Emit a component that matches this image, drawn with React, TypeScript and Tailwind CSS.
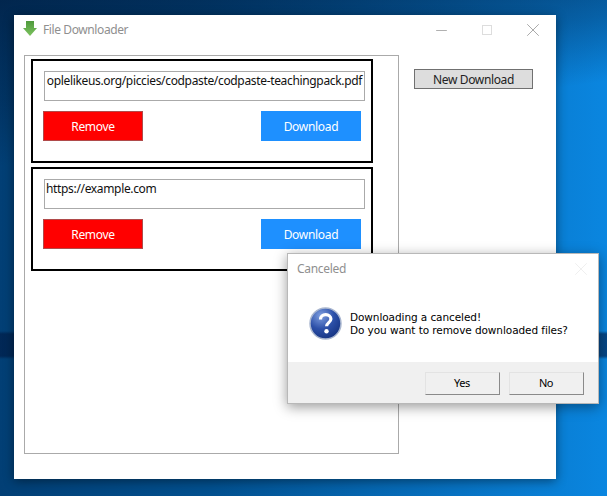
import React from 'react';
import { Minus, X } from 'lucide-react';

const DownloadItem = ({ url, scrolled, className }: { url: string; scrolled?: boolean; className?: string }) => (
    <div className={`w-[342px] h-[104px] border-2 border-black px-[10px] pt-[10px] ${className ?? ''}`}>
        <div className={`ml-[1px] w-[321px] h-[30px] border border-[#aaaaaa] overflow-hidden text-[12px] tracking-[-0.34px] leading-[18px] text-[#111] whitespace-nowrap ${scrolled ? 'flex justify-end pr-[2px]' : 'pl-[1px]'}`}>
            {url}
        </div>
        <div className="flex justify-between w-[318px] mt-[10px]">
            <button className="w-[100px] h-[30px] pt-[2px] bg-[#ff0000] border border-[#b04a4a] text-white text-[12px] tracking-[-0.3px]">Remove</button>
            <button className="w-[100px] h-[30px] pt-[2px] bg-[#1e90ff] text-white text-[12px] tracking-[-0.3px]">Download</button>
        </div>
    </div>
);

const QuestionIcon = () => (
    <svg width="33" height="33" viewBox="0 0 33 33">
        <defs>
            <radialGradient id="q" cx="35%" cy="25%" r="85%">
                <stop offset="0%" stopColor="#7f9fe0" />
                <stop offset="50%" stopColor="#2c50a8" />
                <stop offset="100%" stopColor="#122f7c" />
            </radialGradient>
        </defs>
        <circle cx="16.5" cy="16.5" r="15.5" fill="url(#q)" stroke="#a9b6cf" strokeWidth="1.5" />
        <path d="M11.5 12.5c0-3 2.2-4.8 5.2-4.8s5.2 1.7 5.2 4.3c0 3.6-4.3 3.7-4.3 7.3" fill="none" stroke="#fff" strokeWidth="3.2" />
        <circle cx="17.5" cy="24.2" r="2.2" fill="#fff" />
    </svg>
);

const DialogButton = ({ label }: { label: string }) => (
    <button className="w-[75px] h-[23px] pr-[1px] bg-[#f0f0f0] border border-t-[#e3e3e3] border-l-[#e3e3e3] border-r-[#8a8a8a] border-b-[#8a8a8a] text-black text-[11px] tracking-[-0.4px]">
        {label}
    </button>
);

export default function App() {
    return (
        <div className="relative w-[607px] h-[496px] overflow-hidden bg-[linear-gradient(180deg,transparent_331px,rgba(0,20,60,0.55)_334px,rgba(0,20,60,0.55)_356px,transparent_359px),linear-gradient(172deg,rgba(1,30,65,0.75)_0,rgba(1,30,65,0.35)_100px,transparent_165px),linear-gradient(90deg,#023f75_0,#02508f_35%,#0a86e0_100%)] font-['Noto_Sans','Open_Sans',sans-serif]">
            <div className="absolute left-[14px] top-[15px] w-[542px] h-[464px] bg-white shadow-[0_2px_10px_rgba(0,0,0,0.45)]">
                <div className="flex items-center h-[30px] pl-[9px]">
                    <svg width="14" height="15" viewBox="0 0 14 15" className="mb-[3px]">
                        <defs>
                            <linearGradient id="g" x1="0" y1="0" x2="0" y2="1">
                                <stop offset="0%" stopColor="#4f9a3c" />
                                <stop offset="100%" stopColor="#7cc25f" />
                            </linearGradient>
                        </defs>
                        <path d="M3 0h8v7h3L7 15 0 7h3z" fill="url(#g)" />
                    </svg>
                    <span className="ml-[6px] text-[12px] tracking-[-0.4px] text-[#8f8f8f]">File Downloader</span>
                    <div className="ml-auto flex items-center">
                        <Minus size={17} strokeWidth={1} className="mr-[32px] text-[#8f8f8f]" />
                        <div className="w-[10px] h-[10px] border border-[#dddddd] mr-[30px]" />
                        <X size={22} strokeWidth={0.8} className="mr-[12px] text-[#8a8a8a]" />
                    </div>
                </div>
                <div className="flex items-start pl-[10px] pt-[10px]">
                    <div className="w-[375px] h-[399px] border border-[#aaaaaa] pl-[6px] pt-[3px]">
                        <DownloadItem url="oplelikeus.org/piccies/codpaste/codpaste-teachingpack.pdf" scrolled />
                        <DownloadItem url="https://example.com" className="mt-[4px]" />
                    </div>
                    <button className="ml-[15px] mt-[14px] w-[119px] h-[20px] pt-[2px] bg-[#dddddd] border border-[#707070] text-[12px] tracking-[-0.35px] leading-none text-[#222]">
                        New Download
                    </button>
                </div>
            </div>
            <div className="absolute left-[287px] top-[253px] w-[312px] h-[151px] bg-white border border-[#b8b8b8] shadow-[0_3px_12px_rgba(0,0,0,0.4)] flex flex-col">
                <div className="flex items-center justify-between h-[28px] pl-[9px] pr-[6px] pt-[2px]">
                    <span className="text-[12px] tracking-[-0.3px] text-[#8f8f8f]">Canceled</span>
                    <X size={22} strokeWidth={0.7} className="text-[#e6e6e6]" />
                </div>
                <div className="flex items-center h-[80px] pl-[21px] pt-[3px]">
                    <QuestionIcon />
                    <p className="ml-[8px] text-[10.5px] tracking-[-0.08px] leading-[13px] text-black font-['DejaVu_Sans',sans-serif]">
                        Downloading a canceled!
                        <br />
                        Do you want to remove downloaded files?
                    </p>
                </div>
                <div className="flex-1 bg-[#f0f0f0] flex justify-end gap-[9px] pt-[10px] pr-[14px]">
                    <DialogButton label="Yes" />
                    <DialogButton label="No" />
                </div>
            </div>
        </div>
    );
}
